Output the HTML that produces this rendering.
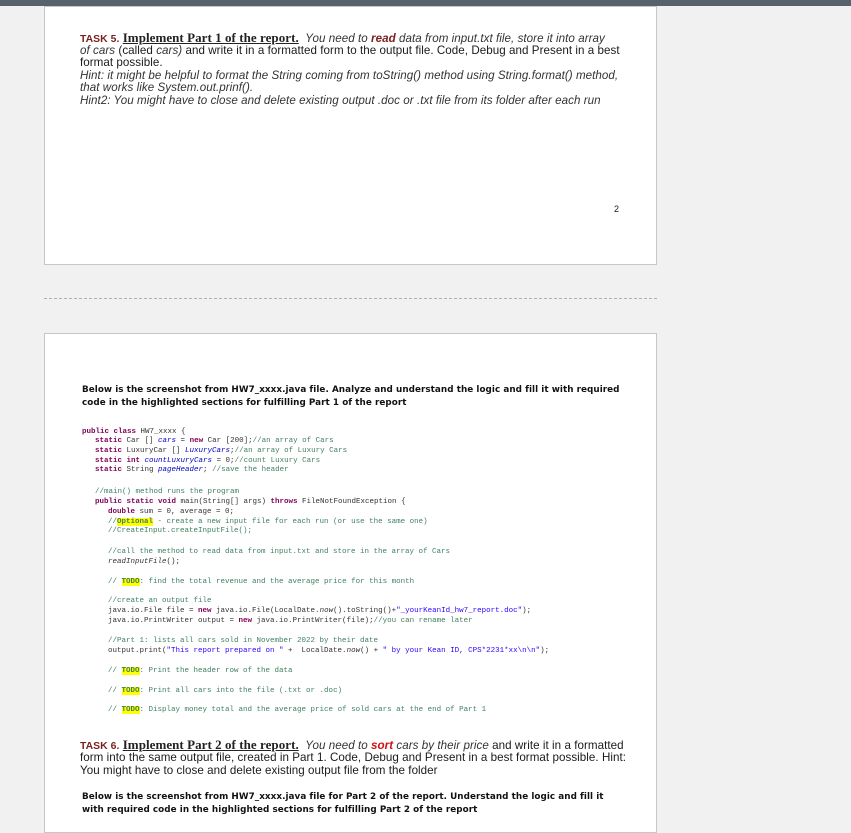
<!DOCTYPE html>
<html><head><meta charset="utf-8"><style>
*{margin:0;padding:0;box-sizing:border-box}
body{width:851px;height:821px;background:#f1f1f1;position:relative;overflow:hidden;font-family:"Liberation Sans",sans-serif}
.bar{position:absolute;left:0;top:0;width:851px;height:6px;background:#56636d}
.page{position:absolute;left:44px;width:613px;background:#fff;border:1px solid #c4c6ca}
.t{position:absolute;left:80px;font-size:11.6px;color:#1a1a1a;white-space:nowrap;line-height:12.5px;letter-spacing:0.05px}
.t i{color:#333}
.tk{color:#7a1f1f;font-size:10.4px}
.h{font-family:"Liberation Serif",serif;font-weight:bold;text-decoration:underline;font-size:13px;color:#222}
.b{position:absolute;left:82px;font-size:8.8px;font-weight:bold;font-family:"Comic Sans MS","DejaVu Sans",sans-serif;color:#111;white-space:nowrap;letter-spacing:0.05px}
.c{position:absolute;font-family:"Liberation Mono",monospace;font-size:7.5px;color:#333;white-space:pre;line-height:9px}
.k{color:#7f0055;font-weight:bold}
.g{color:#3f7f5f}
.f{color:#0000c0;font-style:italic}
.s{color:#2a00ff}
.y{background:#ffff00;color:#3f7f5f;font-weight:bold}
</style></head><body>
<div class="bar"></div>
<div class="page" style="top:6px;height:259px"></div>
<div class="t" style="top:32px"><b class="tk">TASK 5.</b> <span class="h">Implement Part 1 of the report.</span>&nbsp; <i>You need to <b style="color:#7a1f1f">read</b> data from input.txt file, store it into array</i></div>
<div class="t" style="top:45px"><i>of cars</i> (called <i>cars)</i> and write it in a formatted form to the output file. Code, Debug and Present in a best</div>
<div class="t" style="top:57px">format possible.</div>
<div class="t" style="top:70px"><i>Hint: it might be helpful to format the String coming from toString() method using String.format() method,</i></div>
<div class="t" style="top:82px"><i>that works like System.out.prinf().</i></div>
<div class="t" style="top:95px"><i>Hint2: You might have to close and delete existing output .doc or .txt file from its folder after each run</i></div>
<div class="t" style="top:203px;left:614px;font-size:9px">2</div>
<div style="position:absolute;left:44px;top:298px;width:613px;border-top:1px dashed #b0b0b0"></div>
<div class="page" style="top:333px;height:500px"></div>
<div class="b" style="top:385px">Below is the screenshot from HW7_xxxx.java file. Analyze and understand the logic and fill it with required</div>
<div class="b" style="top:398px">code in the highlighted sections for fulfilling Part 1 of the report</div>
<div class="c" style="left:82px;top:428px"><span class="k">public class</span> HW7_xxxx {</div>
<div class="c" style="left:95px;top:437px"><span class="k">static</span> Car [] <span class="f">cars</span> = <span class="k">new</span> Car [200];<span class="g">//an array of Cars</span></div>
<div class="c" style="left:95px;top:447px"><span class="k">static</span> LuxuryCar [] <span class="f">LuxuryCars</span>;<span class="g">//an array of Luxury Cars</span></div>
<div class="c" style="left:95px;top:457px"><span class="k">static int</span> <span class="f">countLuxuryCars</span> = 0;<span class="g">//count Luxury Cars</span></div>
<div class="c" style="left:95px;top:466px"><span class="k">static</span> String <span class="f">pageHeader</span>; <span class="g">//save the header</span></div>
<div class="c g" style="left:95px;top:488px">//main() method runs the program</div>
<div class="c" style="left:95px;top:498px"><span class="k">public static void</span> main(String[] args) <span class="k">throws</span> FileNotFoundException {</div>
<div class="c" style="left:108px;top:508px"><span class="k">double</span> sum = 0, average = 0;</div>
<div class="c g" style="left:108px;top:518px">//<span class="y">Optional</span> - create a new input file for each run (or use the same one)</div>
<div class="c g" style="left:108px;top:527px">//CreateInput.createInputFile();</div>
<div class="c g" style="left:108px;top:548px">//call the method to read data from input.txt and store in the array of Cars</div>
<div class="c" style="left:108px;top:558px"><i>readInputFile</i>();</div>
<div class="c g" style="left:108px;top:578px">// <span class="y">TODO</span>: find the total revenue and the average price for this month</div>
<div class="c g" style="left:108px;top:597px">//create an output file</div>
<div class="c" style="left:108px;top:607px">java.io.File file = <span class="k">new</span> java.io.File(LocalDate.<i>now</i>().toString()+<span class="s">"_yourKeanId_hw7_report.doc"</span>);</div>
<div class="c" style="left:108px;top:617px">java.io.PrintWriter output = <span class="k">new</span> java.io.PrintWriter(file);<span class="g">//you can rename later</span></div>
<div class="c g" style="left:108px;top:637px">//Part 1: lists all cars sold in November 2022 by their date</div>
<div class="c" style="left:108px;top:647px">output.print(<span class="s">"This report prepared on "</span> +  LocalDate.<i>now</i>() + <span class="s">" by your Kean ID, CPS*2231*xx\n\n"</span>);</div>
<div class="c g" style="left:108px;top:667px">// <span class="y">TODO</span>: Print the header row of the data</div>
<div class="c g" style="left:108px;top:687px">// <span class="y">TODO</span>: Print all cars into the file (.txt or .doc)</div>
<div class="c g" style="left:108px;top:706px">// <span class="y">TODO</span>: Display money total and the average price of sold cars at the end of Part 1</div>
<div class="t" style="top:739px"><b class="tk">TASK 6.</b> <span class="h">Implement Part 2 of the report.</span>&nbsp; <i>You need to <b style="color:#d01010">sort</b> cars by their price</i> and write it in a formatted</div>
<div class="t" style="top:752px">form into the same output file, created in Part 1. Code, Debug and Present in a best format possible. Hint:</div>
<div class="t" style="top:765px">You might have to close and delete existing output file from the folder</div>
<div class="b" style="top:792px">Below is the screenshot from HW7_xxxx.java file for Part 2 of the report. Understand the logic and fill it</div>
<div class="b" style="top:805px">with required code in the highlighted sections for fulfilling Part 2 of the report</div>
</body></html>
